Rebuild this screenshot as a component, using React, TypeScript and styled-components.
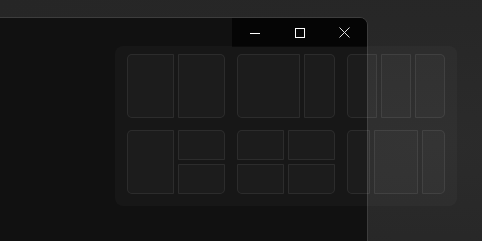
import React from 'react'
import styled, { createGlobalStyle } from 'styled-components'

const Global = createGlobalStyle`
  html, body {
    margin: 0;
    padding: 0;
    width: 100%;
    height: 100%;
    overflow: hidden;
    background: #272727;
    font-family: "Segoe UI", "Noto Sans", sans-serif;
  }
  #root { height: 100%; }
`

type Tile = { col: string; row: string; r: string }

const layouts: { cols: string; rows: string; tiles: Tile[] }[] = [
  {
    cols: '1fr 1fr',
    rows: '1fr',
    tiles: [
      { col: '1', row: '1', r: '5px 1px 1px 5px' },
      { col: '2', row: '1', r: '1px 5px 5px 1px' },
    ],
  },
  {
    cols: '63px 31px',
    rows: '1fr',
    tiles: [
      { col: '1', row: '1', r: '5px 1px 1px 5px' },
      { col: '2', row: '1', r: '1px 5px 5px 1px' },
    ],
  },
  {
    cols: '1fr 1fr 1fr',
    rows: '1fr',
    tiles: [
      { col: '1', row: '1', r: '5px 1px 1px 5px' },
      { col: '2', row: '1', r: '1px' },
      { col: '3', row: '1', r: '1px 5px 5px 1px' },
    ],
  },
  {
    cols: '1fr 1fr',
    rows: '1fr 1fr',
    tiles: [
      { col: '1', row: '1 / span 2', r: '5px 1px 1px 5px' },
      { col: '2', row: '1', r: '1px 5px 1px 1px' },
      { col: '2', row: '2', r: '1px 1px 5px 1px' },
    ],
  },
  {
    cols: '1fr 1fr',
    rows: '1fr 1fr',
    tiles: [
      { col: '1', row: '1', r: '5px 1px 1px 1px' },
      { col: '2', row: '1', r: '1px 5px 1px 1px' },
      { col: '1', row: '2', r: '1px 1px 1px 5px' },
      { col: '2', row: '2', r: '1px 1px 5px 1px' },
    ],
  },
  {
    cols: '23px 44px 23px',
    rows: '1fr',
    tiles: [
      { col: '1', row: '1', r: '5px 1px 1px 5px' },
      { col: '2', row: '1', r: '1px' },
      { col: '3', row: '1', r: '1px 5px 5px 1px' },
    ],
  },
]

export default function App() {
  return (
    <Desktop>
      <Global />
      <Window>
        <TitleBar>
          <CaptionButton>
            <svg width="10" height="10" viewBox="0 0 10 10">
              <path d="M0 5.5h10" stroke="#fff" strokeWidth="1" />
            </svg>
          </CaptionButton>
          <CaptionButton>
            <svg width="10" height="10" viewBox="0 0 10 10">
              <rect x="0.5" y="0.5" width="9" height="9" fill="none" stroke="#fff" strokeWidth="1" />
            </svg>
          </CaptionButton>
          <CaptionButton>
            <svg width="11" height="11" viewBox="0 0 11 11">
              <path d="M0.5 0.5l10 10M10.5 0.5l-10 10" stroke="#ddd" strokeWidth="1" />
            </svg>
          </CaptionButton>
        </TitleBar>
        <Content />
      </Window>
      <Flyout>
        {layouts.map((l, i) => (
          <Layout key={i} $cols={l.cols} $rows={l.rows}>
            {l.tiles.map((t, j) => (
              <Zone key={j} $col={t.col} $row={t.row} $r={t.r} />
            ))}
          </Layout>
        ))}
      </Flyout>
    </Desktop>
  )
}

const Desktop = styled.div`
  position: relative;
  width: 482px;
  height: 241px;
  padding-top: 17px;
  box-sizing: border-box;
  overflow: hidden;
  background: radial-gradient(ellipse at 90% 60%, #2b2b2b 0%, #272727 60%, #262626 100%);
`

const Window = styled.div`
  margin-left: -1px;
  width: 369px;
  height: 240px;
  box-sizing: border-box;
  border: 1px solid #3d3d3d;
  border-top-right-radius: 8px;
  background: #111111;
  overflow: hidden;
  display: flex;
  flex-direction: column;
`

const TitleBar = styled.div`
  height: 29px;
  display: flex;
  justify-content: flex-end;
`

const CaptionButton = styled.div`
  width: 45px;
  height: 29px;
  background: #050505;
  display: flex;
  align-items: center;
  justify-content: center;
`

const Content = styled.div`
  flex: 1;
  background: #111111;
`

const Flyout = styled.div`
  position: absolute;
  left: 115px;
  top: 46px;
  width: 342px;
  height: 160px;
  box-sizing: border-box;
  padding: 8px 12px 12px;
  display: grid;
  grid-template-columns: repeat(3, 98px);
  grid-template-rows: 64px 64px;
  column-gap: 12px;
  row-gap: 12px;
  border-radius: 8px;
  background: rgba(255, 255, 255, 0.028);
`

const Layout = styled.div<{ $cols: string; $rows: string }>`
  display: grid;
  grid-template-columns: ${p => p.$cols};
  grid-template-rows: ${p => p.$rows};
  gap: 4px;
`

const Zone = styled.div<{ $col: string; $row: string; $r: string }>`
  grid-column: ${p => p.$col};
  grid-row: ${p => p.$row};
  border-radius: ${p => p.$r};
  background: rgba(255, 255, 255, 0.025);
  border: 1px solid rgba(255, 255, 255, 0.075);
  box-sizing: border-box;
`
